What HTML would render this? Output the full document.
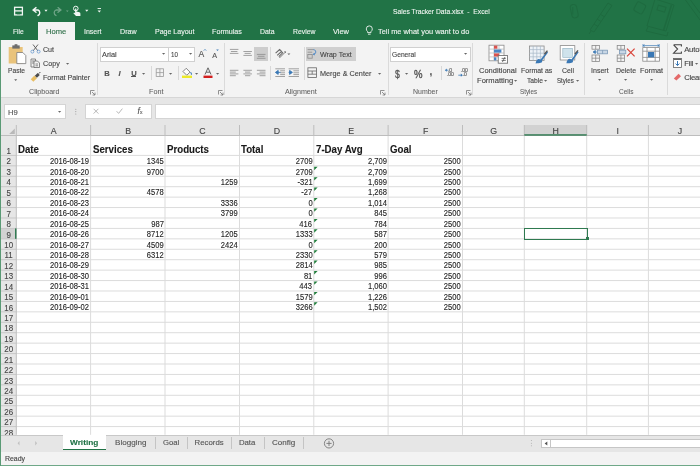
<!DOCTYPE html>
<html><head><meta charset="utf-8">
<style>
html,body{margin:0;padding:0;}
body{width:700px;height:466px;overflow:hidden;position:relative;background:#fff;font-family:"Liberation Sans",sans-serif;}
.a{position:absolute;}
.t{position:absolute;white-space:nowrap;line-height:1;-webkit-text-stroke:0.12px currentColor;}
svg{position:absolute;overflow:visible;}
#root{position:absolute;left:0;top:0;width:700px;height:466px;overflow:hidden;background:#fff;will-change:transform;}
</style></head><body><div id="root">

<div class="a" style="left:0;top:0;width:700px;height:40px;background:#217346;"></div>
<svg style="left:0;top:0" width="700" height="40" viewBox="0 0 700 40">
<g fill="none" stroke="#1b6239" stroke-width="1" opacity="0.5">
<rect x="571" y="4.5" width="6.4" height="13.5" rx="3.2" transform="rotate(-12 574 11)"/>
<path d="M572.8 7 V14.5" />
<path d="M608 3 L612 5.5 L594 32 L590 30 Z M591 31 L589 34"/>
<path d="M600 14 L604 16.5 M597 19 L601 21.5 M594 24 L598 26.5"/>
<rect x="635" y="3" width="9.5" height="10" rx="2" transform="rotate(28 640 8)"/>
<path d="M655 -1 L674 5 L666 31 L647 26 Z"/>
<path d="M671.5 5 L663.5 30.5" stroke-width="1.6"/>
<rect x="657.5" y="6" width="8" height="5" transform="rotate(17 661 8.5)"/>
<path d="M648 27 L646 31 L667 36 L668 32"/>
<path d="M684 -2 L700 20 M689 -2 L700 13"/>
</g></svg>
<svg style="left:0;top:0" width="120" height="22" viewBox="0 0 120 22">
<g fill="none" stroke="#f2f7f4" stroke-width="1.3">
<rect x="14.6" y="7.3" width="7.8" height="7.6"/>
<path d="M14.6 10.9 H22.4"/>
</g>
<rect x="16.9" y="12.9" width="3.2" height="1.4" fill="#217346"/>
<g fill="none" stroke="#f2f7f4" stroke-width="1.4" stroke-linecap="round">
<path d="M33 10 L36 7.6 M33 10 L36 12.3 M33 10 H38 A3 3 0 0 1 38 15.5"/>
</g>
<path d="M44.4 9.8 H47.6 L46 11.8 Z" fill="#f2f7f4"/>
<g fill="none" stroke="#6fa487" stroke-width="1.3" stroke-linecap="round">
<path d="M61 10 L58 7.6 M61 10 L58 12.3 M61 10 H56 A3 3 0 0 0 56 15.5"/>
</g>
<path d="M66 10.5 H68.6 L67.3 11.9 Z" fill="#6fa487"/>
<g fill="#f2f7f4">
<circle cx="75.8" cy="8.5" r="2.3" fill="none" stroke="#f2f7f4" stroke-width="1"/>
<path d="M75.1 8.6 h1.3 v3 l3 0.7 c0.7 0.2 1 0.7 1 1.4 v2.3 h-4.4 l-2.6 -2.8 l0.7 -0.6 l1 0.7 z"/>
</g>
<path d="M85.2 9.8 H88.4 L86.8 11.8 Z" fill="#f2f7f4"/>
<rect x="97.6" y="8.1" width="3.4" height="0.9" fill="#f2f7f4"/>
<path d="M97.6 10.4 H101 L99.3 12.4 Z" fill="#f2f7f4"/>
</svg>
<div class="t" style="left:393.20px;top:7.77px;font-size:7.8px;color:#eef4f0;transform:scaleX(0.862);transform-origin:0 0;">Sales Tracker Data.xlsx &nbsp;-&nbsp; Excel</div>
<div class="a" style="left:38px;top:22px;width:37px;height:18px;background:#f3f3f3;"></div>
<div class="t" style="left:13.20px;top:27.77px;font-size:7.8px;color:#eef4f0;transform:scaleX(0.860);transform-origin:0 0;">File</div>
<div class="t" style="left:46.20px;top:27.77px;font-size:7.8px;color:#2f6f49;transform:scaleX(0.975);transform-origin:0 0;">Home</div>
<div class="t" style="left:84.00px;top:27.77px;font-size:7.8px;color:#eef4f0;transform:scaleX(0.897);transform-origin:0 0;">Insert</div>
<div class="t" style="left:120.00px;top:27.77px;font-size:7.8px;color:#eef4f0;transform:scaleX(0.911);transform-origin:0 0;">Draw</div>
<div class="t" style="left:154.60px;top:27.77px;font-size:7.8px;color:#eef4f0;transform:scaleX(0.900);transform-origin:0 0;">Page Layout</div>
<div class="t" style="left:212.00px;top:27.77px;font-size:7.8px;color:#eef4f0;transform:scaleX(0.922);transform-origin:0 0;">Formulas</div>
<div class="t" style="left:260.00px;top:27.77px;font-size:7.8px;color:#eef4f0;transform:scaleX(0.885);transform-origin:0 0;">Data</div>
<div class="t" style="left:292.60px;top:27.77px;font-size:7.8px;color:#eef4f0;transform:scaleX(0.876);transform-origin:0 0;">Review</div>
<div class="t" style="left:333.00px;top:27.77px;font-size:7.8px;color:#eef4f0;transform:scaleX(0.954);transform-origin:0 0;">View</div>
<svg style="left:0;top:0" width="380" height="40" viewBox="0 0 380 40">
<path d="M367.6 32.6 V31.6 C366.7 30.8 366.3 30 366.3 28.9 A3 3 0 0 1 372.3 28.9 C372.3 30 371.9 30.8 371 31.6 V32.6 Z M368 34.2 H370.6" fill="none" stroke="#eef4f0" stroke-width="0.9"/>
</svg>
<div class="t" style="left:377.50px;top:27.77px;font-size:7.8px;color:#eef4f0;transform:scaleX(0.949);transform-origin:0 0;">Tell me what you want to do</div>
<div class="a" style="left:0;top:40px;width:700px;height:57px;background:#f3f3f3;border-bottom:1px solid #d6d6d6;"></div>
<div class="a" style="left:96.9px;top:43px;width:1px;height:52px;background:#dadada;"></div>
<div class="a" style="left:223.8px;top:43px;width:1px;height:52px;background:#dadada;"></div>
<div class="a" style="left:387.5px;top:43px;width:1px;height:52px;background:#dadada;"></div>
<div class="a" style="left:471.9px;top:43px;width:1px;height:52px;background:#dadada;"></div>
<div class="a" style="left:583.8px;top:43px;width:1px;height:52px;background:#dadada;"></div>
<div class="a" style="left:666.7px;top:43px;width:1px;height:52px;background:#dadada;"></div>
<div class="t" style="left:28.70px;top:88.49px;font-size:7.3px;color:#606060;transform:scaleX(0.973);transform-origin:0 0;-webkit-text-stroke:0.05px #606060;">Clipboard</div>
<div class="t" style="left:148.80px;top:88.49px;font-size:7.3px;color:#606060;transform:scaleX(0.986);transform-origin:0 0;-webkit-text-stroke:0.05px #606060;">Font</div>
<div class="t" style="left:284.90px;top:88.49px;font-size:7.3px;color:#606060;transform:scaleX(0.980);transform-origin:0 0;-webkit-text-stroke:0.05px #606060;">Alignment</div>
<div class="t" style="left:413.00px;top:88.49px;font-size:7.3px;color:#606060;transform:scaleX(0.952);transform-origin:0 0;-webkit-text-stroke:0.05px #606060;">Number</div>
<div class="t" style="left:519.60px;top:88.49px;font-size:7.3px;color:#606060;transform:scaleX(0.860);transform-origin:0 0;-webkit-text-stroke:0.05px #606060;">Styles</div>
<div class="t" style="left:618.60px;top:88.49px;font-size:7.3px;color:#606060;transform:scaleX(0.893);transform-origin:0 0;-webkit-text-stroke:0.05px #606060;">Cells</div>
<svg style="left:90px;top:89.8px" width="6" height="6" viewBox="0 0 6 6"><path d="M0.5 4.5 V0.5 H4.5" fill="none" stroke="#777" stroke-width="0.8"/><path d="M2 2 L5 5 M5 2.6 V5 H2.6" fill="none" stroke="#777" stroke-width="0.8"/></svg>
<svg style="left:217.5px;top:89.8px" width="6" height="6" viewBox="0 0 6 6"><path d="M0.5 4.5 V0.5 H4.5" fill="none" stroke="#777" stroke-width="0.8"/><path d="M2 2 L5 5 M5 2.6 V5 H2.6" fill="none" stroke="#777" stroke-width="0.8"/></svg>
<svg style="left:379.6px;top:89.8px" width="6" height="6" viewBox="0 0 6 6"><path d="M0.5 4.5 V0.5 H4.5" fill="none" stroke="#777" stroke-width="0.8"/><path d="M2 2 L5 5 M5 2.6 V5 H2.6" fill="none" stroke="#777" stroke-width="0.8"/></svg>
<svg style="left:466px;top:89.8px" width="6" height="6" viewBox="0 0 6 6"><path d="M0.5 4.5 V0.5 H4.5" fill="none" stroke="#777" stroke-width="0.8"/><path d="M2 2 L5 5 M5 2.6 V5 H2.6" fill="none" stroke="#777" stroke-width="0.8"/></svg>
<svg style="left:0;top:40px" width="100" height="57" viewBox="0 0 100 57">
<rect x="8.7" y="7" width="14" height="16.5" fill="#e9c37b"/>
<rect x="12.3" y="5.4" width="7.4" height="3.2" fill="#6d6d6d"/>
<rect x="14.6" y="4.2" width="2.8" height="1.8" fill="#6d6d6d"/>
<path d="M16.8 12.5 H22.8 L25.8 15.5 V23.6 H16.8 Z" fill="#fff" stroke="#7a7a7a" stroke-width="0.8"/>
<path d="M14.2 39.3 H17.2 L15.7 40.9 Z" fill="#666"/>
<g fill="none" stroke="#555" stroke-width="0.9">
<path d="M33 4.5 L38 11 M38 4.5 L33 11"/>
<circle cx="32.4" cy="11.6" r="1.5" stroke="#6a9bd0" stroke-width="0.8"/><circle cx="38.6" cy="11.6" r="1.5" stroke="#6a9bd0" stroke-width="0.8"/>
</g>
<g fill="none" stroke="#6a6a6a" stroke-width="0.8">
<path d="M31 19 H35.5 V27 H31 Z"/>
<path d="M34 21 H37.5 L39.5 23 V27.5 H34 Z" fill="#f3f3f3"/>
<path d="M32 21 H34 M32 23 H34 M35.5 24 H38 M35.5 25.8 H38"/>
</g>
<g>
<rect x="-2.5" y="-1.8" width="5.2" height="3.6" fill="#e8bd62" transform="translate(33.8 38.8) rotate(-45)"/>
<rect x="-2" y="-1.5" width="4" height="3" fill="#4a4a4a" transform="translate(37.3 35.4) rotate(-45)"/>
<path d="M38.8 33.6 L40.4 32" stroke="#4a4a4a" stroke-width="1"/>
</g>
</svg>
<div class="t" style="left:7.70px;top:66.65px;font-size:7.7px;color:#444444;transform:scaleX(0.869);transform-origin:0 0;">Paste</div>
<div class="t" style="left:42.60px;top:45.95px;font-size:7.7px;color:#444444;transform:scaleX(0.919);transform-origin:0 0;">Cut</div>
<div class="t" style="left:42.60px;top:59.65px;font-size:7.7px;color:#444444;transform:scaleX(0.934);transform-origin:0 0;">Copy</div>
<svg style="left:65.5px;top:62.6px" width="4" height="3" viewBox="0 0 4 3"><path d="M0 0 H3.2 L1.6 1.7 Z" fill="#666"/></svg>
<div class="t" style="left:42.70px;top:74.35px;font-size:7.7px;color:#444444;transform:scaleX(0.927);transform-origin:0 0;">Format Painter</div>
<div class="a" style="left:100.4px;top:47.4px;width:67.4px;height:12.6px;background:#fff;border:1px solid #d0d0d0;"></div>
<div class="a" style="left:168.3px;top:47.4px;width:24.6px;height:12.6px;background:#fff;border:1px solid #d0d0d0;"></div>
<div class="t" style="left:102.20px;top:50.95px;font-size:7.7px;color:#444444;transform:scaleX(0.955);transform-origin:0 0;">Arial</div>
<div class="t" style="left:170.70px;top:50.95px;font-size:7.7px;color:#444444;transform:scaleX(0.807);transform-origin:0 0;">10</div>
<svg style="left:162.20000000000002px;top:53.2px" width="4" height="3" viewBox="0 0 4 3"><path d="M0 0 H3.2 L1.6 1.7 Z" fill="#666"/></svg>
<svg style="left:188.70000000000002px;top:53.2px" width="4" height="3" viewBox="0 0 4 3"><path d="M0 0 H3.2 L1.6 1.7 Z" fill="#666"/></svg>
<div class="t " style="left:198.5px;top:50.2px;font-size:8.6px;color:#555;">A</div>
<div class="t " style="left:212.3px;top:51.6px;font-size:7.2px;color:#555;">A</div>
<svg style="left:0;top:0" width="230" height="100" viewBox="0 0 230 100"><path d="M203.8 50.6 L205 49.4 L206.2 50.6" fill="none" stroke="#3a78b5" stroke-width="0.8"/><path d="M216.2 49.6 H218.8 L217.5 51 Z" fill="#3a78b5"/></svg>
<div class="t " style="left:104.2px;top:69.9px;font-size:7.6px;color:#555;font-weight:bold;">B</div>
<div class="t " style="left:118.4px;top:69.9px;font-size:7.6px;color:#555;font-style:italic;font-weight:bold;">I</div>
<div class="t " style="left:131.2px;top:69.9px;font-size:7.6px;color:#555;font-weight:bold;">U</div>
<div class="a" style="left:131.3px;top:76.3px;width:4.8px;height:0.8px;background:#555;"></div>
<svg style="left:142.4px;top:72.7px" width="4" height="3" viewBox="0 0 4 3"><path d="M0 0 H3.2 L1.6 1.7 Z" fill="#666"/></svg>
<svg style="left:0;top:0" width="230" height="100" viewBox="0 0 230 100"><g fill="none" stroke="#9a9a9a" stroke-width="0.8"><rect x="156.2" y="68.8" width="7.4" height="7.6"/><path d="M159.9 68.8 V76.4 M156.2 72.6 H163.6"/></g></svg>
<svg style="left:168.8px;top:72.7px" width="4" height="3" viewBox="0 0 4 3"><path d="M0 0 H3.2 L1.6 1.7 Z" fill="#666"/></svg>
<div class="a" style="left:151px;top:66px;width:1px;height:14px;background:#d8d8d8;"></div>
<div class="a" style="left:177.9px;top:66px;width:1px;height:14px;background:#d8d8d8;"></div>
<svg style="left:0;top:0" width="230" height="100" viewBox="0 0 230 100">
<path d="M183 71.5 L186.2 68.3 L190 72.1 L186.8 75.3 Z" fill="#fff" stroke="#666" stroke-width="0.8"/>
<path d="M190.5 72 C191.8 73.5 191.8 74.6 191 74.8" fill="#3a78b5" stroke="#3a78b5" stroke-width="0.8"/>
<rect x="182" y="75.6" width="10" height="2.4" fill="#ecea2a"/>
<path d="M205 74.5 L208 67.8 L211 74.5 M206.2 72.2 H209.8" fill="none" stroke="#555" stroke-width="0.9"/>
<rect x="203.5" y="75.6" width="9" height="2.4" fill="#d21f1f"/>
</svg>
<svg style="left:195.3px;top:72.7px" width="4" height="3" viewBox="0 0 4 3"><path d="M0 0 H3.2 L1.6 1.7 Z" fill="#666"/></svg>
<svg style="left:216.3px;top:72.7px" width="4" height="3" viewBox="0 0 4 3"><path d="M0 0 H3.2 L1.6 1.7 Z" fill="#666"/></svg>
<div class="a" style="left:254.2px;top:47px;width:13.8px;height:14px;background:#cdcdcd;"></div>
<div class="a" style="left:305.9px;top:47.2px;width:49.8px;height:13.8px;background:#cfcfcf;"></div>
<svg style="left:0;top:0" width="400" height="100" viewBox="0 0 400 100">
<g stroke="#8a8a8a" stroke-width="0.8" fill="none">
<path d="M229.9 49.4 H238.4 M230.9 51.5 H237.4 M229.9 53.4 H238.4"/>
<path d="M243.4 51.5 H251.9 M244.6 53.4 H250.7 M243.4 55.4 H251.9"/>
<path d="M256.9 54.4 H265.5 M257.9 56.3 H264.5 M256.9 58.3 H265.5"/>
<path d="M229.9 70.3 H238.4 M229.9 72.1 H235.8 M229.9 73.9 H238.4 M229.9 75.7 H235.8"/>
<path d="M243.4 70.3 H251.9 M245 72.1 H250.3 M243.4 73.9 H251.9 M245 75.7 H250.3"/>
<path d="M256.9 70.3 H265.5 M259.6 72.1 H265.5 M256.9 73.9 H265.5 M259.6 75.7 H265.5"/>
<path d="M275.3 68.8 H285 M280.2 70.8 H285 M280.2 72.8 H285 M280.2 74.6 H285 M275.3 76.5 H285"/>
<path d="M288.6 68.8 H299 M293.4 70.8 H299 M293.4 72.8 H299 M293.4 74.6 H299 M288.6 76.5 H299"/>
</g>
<path d="M275.4 72.4 L278.2 70.4 V74.4 Z M277.6 72.4 H280.6" fill="#3a78b5" stroke="#3a78b5" stroke-width="0.9"/>
<path d="M292.4 72.4 L289.6 70.4 V74.4 Z M288.6 72.4 H290.4" fill="#3a78b5" stroke="#3a78b5" stroke-width="0.9"/>
<g fill="none" stroke="#6a6a6a" stroke-width="1.1">
<path d="M275.6 53.2 L279.6 49.6 L281.4 51.2 M277.2 55.4 L281.4 51.6 L282.6 52.8 L278.8 56.6"/>
</g>
<path d="M279.4 58 L285 52.4" stroke="#6a6a6a" stroke-width="0.9"/>
<path d="M284.2 51.8 L285.6 51.6 L285.4 53" fill="none" stroke="#6a6a6a" stroke-width="0.8"/>
<path d="M287.4 53.4 H290.4 L288.9 55 Z" fill="#666"/>
<g fill="none" stroke="#666" stroke-width="0.8">
<path d="M307.6 49.6 H313.6 M307.6 52.2 H312.2" stroke="#8a8a8a"/>
<rect x="307.8" y="54.4" width="4.4" height="3.8" stroke="#8a8a8a"/>
<path d="M313.4 49.6 C316.4 49.6 316.6 54 313.8 54.2" stroke="#4a86c5" stroke-width="0.9"/>
<rect x="307.9" y="67.8" width="8.6" height="9.6"/>
<path d="M307.9 71 H316.5 M307.9 74.2 H316.5 M312.2 71 V74.2"/>
</g>
<path d="M312.6 54.2 L314.6 52.8 V55.6 Z" fill="#4a86c5"/>
</svg>
<div class="a" style="left:270.3px;top:47px;width:1px;height:14px;background:#d8d8d8;"></div>
<div class="a" style="left:270.3px;top:66px;width:1px;height:14px;background:#d8d8d8;"></div>
<div class="a" style="left:303.6px;top:47px;width:1px;height:33px;background:#d8d8d8;"></div>
<div class="t" style="left:319.70px;top:51.05px;font-size:7.7px;color:#444444;transform:scaleX(0.922);transform-origin:0 0;">Wrap Text</div>
<div class="t" style="left:320.10px;top:70.05px;font-size:7.7px;color:#444444;transform:scaleX(0.947);transform-origin:0 0;">Merge &amp; Center</div>
<svg style="left:377.79999999999995px;top:72.7px" width="4" height="3" viewBox="0 0 4 3"><path d="M0 0 H3.2 L1.6 1.7 Z" fill="#666"/></svg>
<div class="a" style="left:389.5px;top:47.4px;width:79px;height:12.8px;background:#fff;border:1px solid #d0d0d0;"></div>
<div class="t" style="left:392.00px;top:50.95px;font-size:7.7px;color:#444444;transform:scaleX(0.868);transform-origin:0 0;">General</div>
<svg style="left:463.7px;top:53.400000000000006px" width="4" height="3" viewBox="0 0 4 3"><path d="M0 0 H3.2 L1.6 1.7 Z" fill="#666"/></svg>
<div class="t" style="left:394.60px;top:68.88px;font-size:10.5px;color:#555;transform:scaleX(0.824);transform-origin:0 0;-webkit-text-stroke:0.3px #555;">$</div>
<svg style="left:405.0px;top:72.7px" width="4" height="3" viewBox="0 0 4 3"><path d="M0 0 H3.2 L1.6 1.7 Z" fill="#666"/></svg>
<div class="t" style="left:413.50px;top:69.50px;font-size:10px;color:#555;transform:scaleX(0.955);transform-origin:0 0;-webkit-text-stroke:0.35px #555;">%</div>
<div class="t" style="left:429.40px;top:66.70px;font-size:10px;color:#555;font-weight:bold;">,</div>
<div class="a" style="left:440.5px;top:66px;width:1px;height:14px;background:#d8d8d8;"></div>
<div class="t " style="left:447.6px;top:67.6px;font-size:5.8px;color:#666;letter-spacing:-0.2px;">.0</div>
<div class="t " style="left:446.6px;top:72.4px;font-size:5.8px;color:#666;letter-spacing:-0.3px;">.00</div>
<div class="t " style="left:460.6px;top:67.6px;font-size:5.8px;color:#666;letter-spacing:-0.3px;">.00</div>
<div class="t " style="left:462.4px;top:72.4px;font-size:5.8px;color:#666;letter-spacing:-0.2px;">.0</div>
<svg style="left:0;top:0" width="480" height="100" viewBox="0 0 480 100">
<path d="M444.8 70.2 L446.8 68.6 V71.8 Z" fill="#3a78b5"/><path d="M446.4 70.2 H448.5" stroke="#3a78b5" stroke-width="0.8"/>
<path d="M462.8 75.2 L460.8 73.6 V76.8 Z" fill="#3a78b5"/><path d="M458.3 75.2 H461" stroke="#3a78b5" stroke-width="0.8"/>
</svg>
<svg style="left:0;top:0" width="700" height="100" viewBox="0 0 700 100">
<g>
<rect x="489" y="45.2" width="15" height="15.6" fill="#fff" stroke="#8a8a8a" stroke-width="0.8"/>
<path d="M489 49.1 H504 M489 53 H504 M489 56.9 H504 M494 45.2 V60.8 M499 45.2 V60.8" stroke="#b5b5b5" stroke-width="0.7"/>
<rect x="494" y="45.6" width="3.4" height="3.1" fill="#d9534f"/>
<rect x="494" y="49.5" width="7.4" height="3.1" fill="#4a86c5"/>
<rect x="494" y="53.4" width="5.2" height="3.1" fill="#d9534f"/>
<rect x="494" y="57.3" width="2.4" height="3.1" fill="#4a86c5"/>
<rect x="498.2" y="55.6" width="9.4" height="7.6" fill="#fff" stroke="#666" stroke-width="0.8"/>
<path d="M501.6 58.4 H505.8 M501.6 60.4 H505.8 M505 57 L502.4 62" stroke="#444" stroke-width="0.7"/>
</g>
<g>
<rect x="529.5" y="46" width="14.6" height="14.4" fill="#eef3f8" stroke="#8a8a8a" stroke-width="0.8"/>
<path d="M529.5 49.6 H544 M529.5 53.2 H544 M529.5 56.8 H544 M533.2 46 V60.4 M536.8 46 V60.4 M540.4 46 V60.4" stroke="#a8b8c8" stroke-width="0.7"/>
<path d="M535.6 63.4 C536.2 59.5 538.4 58 540.6 59.6 L547 51.5 L548 52.5 L542 60.6 C543 63 540 63.4 535.6 63.4 Z" fill="#3a78b5"/>
<path d="M544.5 54.2 L547.4 50.6" stroke="#555" stroke-width="1.4"/>
</g>
<g>
<rect x="560.2" y="45.6" width="14.6" height="14.4" fill="#fff" stroke="#8a8a8a" stroke-width="0.8"/>
<rect x="562.8" y="48.3" width="9.6" height="9" fill="#cfe3ec" stroke="#8fb0c0" stroke-width="0.6"/>
<path d="M566.4 63.2 C567 59.3 569.2 57.8 571.4 59.4 L577.6 51.3 L578.6 52.3 L572.8 60.4 C573.8 62.8 570.8 63.2 566.4 63.2 Z" fill="#3a78b5"/>
<path d="M575 54 L578 50.4" stroke="#555" stroke-width="1.4"/>
</g>
</svg>
<div class="t" style="left:479.00px;top:67.15px;font-size:7.7px;color:#444444;transform:scaleX(0.978);transform-origin:0 0;">Conditional</div>
<div class="t" style="left:477.00px;top:76.95px;font-size:7.7px;color:#444444;transform:scaleX(0.986);transform-origin:0 0;">Formatting</div>
<svg style="left:514.0px;top:80.0px" width="4" height="3" viewBox="0 0 4 3"><path d="M0 0 H3.2 L1.6 1.7 Z" fill="#666"/></svg>
<div class="t" style="left:521.30px;top:67.15px;font-size:7.7px;color:#444444;transform:scaleX(0.906);transform-origin:0 0;">Format as</div>
<div class="t" style="left:527.00px;top:76.95px;font-size:7.7px;color:#444444;transform:scaleX(0.869);transform-origin:0 0;">Table</div>
<svg style="left:544.1999999999999px;top:80.0px" width="4" height="3" viewBox="0 0 4 3"><path d="M0 0 H3.2 L1.6 1.7 Z" fill="#666"/></svg>
<div class="t" style="left:561.70px;top:67.15px;font-size:7.7px;color:#444444;transform:scaleX(0.903);transform-origin:0 0;">Cell</div>
<div class="t" style="left:556.60px;top:76.95px;font-size:7.7px;color:#444444;transform:scaleX(0.801);transform-origin:0 0;">Styles</div>
<svg style="left:575.9px;top:80.0px" width="4" height="3" viewBox="0 0 4 3"><path d="M0 0 H3.2 L1.6 1.7 Z" fill="#666"/></svg>
<svg style="left:0;top:0" width="700" height="100" viewBox="0 0 700 100">
<g fill="none" stroke="#8a8a8a" stroke-width="0.8">
<rect x="592" y="45.4" width="7.4" height="3.8"/><path d="M595.7 45.4 V49.2"/>
<rect x="592" y="55" width="7.4" height="6.4"/><path d="M592 58.2 H599.4 M595.7 55 V61.4"/>
<rect x="597.6" y="50.2" width="10" height="3.6" fill="#c9d7e6" stroke="#7d9bb8"/><path d="M602.6 50.2 V53.8" stroke="#7d9bb8"/>
<rect x="617.2" y="45.4" width="7.4" height="3.8"/><path d="M620.9 45.4 V49.2"/>
<rect x="617.2" y="55" width="7.4" height="6.4"/><path d="M617.2 58.2 H624.6 M620.9 55 V61.4"/>
<rect x="619.4" y="50.2" width="6.4" height="3.6" fill="#c9d7e6" stroke="#7d9bb8"/>
<rect x="642.8" y="47.6" width="16.6" height="13.6" fill="#fff"/>
<path d="M642.8 51.2 H659.4 M642.8 57.4 H659.4 M647 47.6 V61.2 M655.2 47.6 V61.2"/>
</g>
<path d="M593 52 L595.4 50.4 V53.6 Z M595 52 H597.4" fill="#3a78b5" stroke="#3a78b5" stroke-width="0.7"/>
<path d="M627 48.6 L634.6 56.4 M634.6 48.6 L627 56.4" stroke="#d9443a" stroke-width="1.2"/>
<rect x="648" y="52" width="6.2" height="5.4" fill="#3a78b5"/>
<path d="M643.2 45.6 H659 M643.2 45.6 L644.6 44.6 M643.2 45.6 L644.6 46.6 M659 45.6 L657.6 44.6 M659 45.6 L657.6 46.6 M643 44 V47 M659.2 44 V47" fill="none" stroke="#3a78b5" stroke-width="0.7"/>
<path d="M673.6 44.8 H681.4 V46.6 M673.6 44.8 L677.6 49 L673.6 53.2 H681.4 V51.4" fill="none" stroke="#444" stroke-width="1.1"/>
<rect x="673.6" y="58.4" width="7.8" height="9" fill="#fff" stroke="#666" stroke-width="0.8"/>
<rect x="673.6" y="58.4" width="7.8" height="1.6" fill="#666"/>
<path d="M677.5 61 V65.4 M675.6 63.6 L677.5 65.6 L679.4 63.6" fill="none" stroke="#3a78b5" stroke-width="1"/>
<path d="M673.8 78.4 L678.6 73.8 L681 76.2 L676.4 80.6 Z" fill="#e46a6a"/>
</svg>
<div class="t" style="left:590.60px;top:67.15px;font-size:7.7px;color:#444444;transform:scaleX(0.919);transform-origin:0 0;">Insert</div>
<svg style="left:598.1px;top:79.0px" width="4" height="3" viewBox="0 0 4 3"><path d="M0 0 H3.2 L1.6 1.7 Z" fill="#666"/></svg>
<div class="t" style="left:615.70px;top:67.15px;font-size:7.7px;color:#444444;transform:scaleX(0.899);transform-origin:0 0;">Delete</div>
<svg style="left:623.8px;top:79.0px" width="4" height="3" viewBox="0 0 4 3"><path d="M0 0 H3.2 L1.6 1.7 Z" fill="#666"/></svg>
<div class="t" style="left:640.00px;top:67.15px;font-size:7.7px;color:#444444;transform:scaleX(0.948);transform-origin:0 0;">Format</div>
<svg style="left:650.1px;top:79.0px" width="4" height="3" viewBox="0 0 4 3"><path d="M0 0 H3.2 L1.6 1.7 Z" fill="#666"/></svg>
<div class="t" style="left:684.20px;top:45.55px;font-size:7.7px;color:#444444;letter-spacing:-0.2px;">AutoSum</div>
<div class="t" style="left:684.20px;top:60.13px;font-size:7.5px;color:#444444;letter-spacing:-0.1px;">Fill</div>
<svg style="left:695.4px;top:62.800000000000004px" width="4" height="3" viewBox="0 0 4 3"><path d="M0 0 H3.2 L1.6 1.7 Z" fill="#666"/></svg>
<div class="t" style="left:684.20px;top:73.85px;font-size:7.7px;color:#444444;letter-spacing:-0.2px;">Clear</div>
<div class="a" style="left:0;top:98px;width:700px;height:37.5px;background:#e6e6e6;"></div>
<div class="a" style="left:4.2px;top:104.2px;width:61.8px;height:14.8px;background:#fff;border:0.8px solid #d4d4d4;box-sizing:border-box;"></div>
<div class="t" style="left:8.20px;top:108.85px;font-size:7.7px;color:#555;transform:scaleX(0.994);transform-origin:0 0;">H9</div>
<svg style="left:58.0px;top:111.2px" width="4" height="3" viewBox="0 0 4 3"><path d="M0 0 H3.2 L1.6 1.7 Z" fill="#666"/></svg>
<svg style="left:0;top:0" width="160" height="130" viewBox="0 0 160 130"><g fill="#9a9a9a"><circle cx="75.8" cy="109.2" r="0.55"/><circle cx="75.8" cy="111.6" r="0.55"/><circle cx="75.8" cy="114" r="0.55"/></g></svg>
<div class="a" style="left:85.4px;top:103.7px;width:66.7px;height:15.5px;background:#fff;border:0.8px solid #d4d4d4;box-sizing:border-box;"></div>
<svg style="left:0;top:0" width="160" height="130" viewBox="0 0 160 130">
<path d="M93.6 108.8 L98.4 113.6 M98.4 108.8 L93.6 113.6" stroke="#b0b0b0" stroke-width="0.9" fill="none"/>
<path d="M116.6 111.2 L118.6 113.4 L122.4 108.6" stroke="#b0b0b0" stroke-width="0.9" fill="none"/>
</svg>
<div class="t " style="left:137.6px;top:107.2px;font-size:8.4px;color:#555;font-family:"Liberation Serif",serif;"><i>f</i><span style="font-size:5px">x</span></div>
<div class="a" style="left:154.9px;top:104.3px;width:546px;height:14.8px;background:#fff;border:0.8px solid #d4d4d4;box-sizing:border-box;"></div>
<div class="a" style="left:16.3px;top:135.5px;width:684px;height:299.3px;background:#fff;"></div>
<div class="a" style="left:1px;top:135.5px;width:15.3px;height:299.3px;background:#e6e6e6;"></div>
<div class="a" style="left:1px;top:228.41px;width:15.3px;height:10.430000000000007px;background:#d2d2d2;"></div>
<div class="a" style="left:524.3px;top:125.0px;width:62.40000000000009px;height:10.5px;background:#d2d2d2;"></div>
<svg style="left:0;top:0" width="700" height="466" viewBox="0 0 700 466"><rect x="90.1" y="135.5" width="1" height="299.3" fill="#dcdcdc"/><rect x="90.1" y="125.0" width="1" height="10.5" fill="#bdbdbd"/><rect x="164.5" y="135.5" width="1" height="299.3" fill="#dcdcdc"/><rect x="164.5" y="125.0" width="1" height="10.5" fill="#bdbdbd"/><rect x="239.0" y="135.5" width="1" height="299.3" fill="#dcdcdc"/><rect x="239.0" y="125.0" width="1" height="10.5" fill="#bdbdbd"/><rect x="313.3" y="135.5" width="1" height="299.3" fill="#dcdcdc"/><rect x="313.3" y="125.0" width="1" height="10.5" fill="#bdbdbd"/><rect x="387.6" y="135.5" width="1" height="299.3" fill="#dcdcdc"/><rect x="387.6" y="125.0" width="1" height="10.5" fill="#bdbdbd"/><rect x="462.0" y="135.5" width="1" height="299.3" fill="#dcdcdc"/><rect x="462.0" y="125.0" width="1" height="10.5" fill="#bdbdbd"/><rect x="523.8" y="135.5" width="1" height="299.3" fill="#dcdcdc"/><rect x="523.8" y="125.0" width="1" height="10.5" fill="#bdbdbd"/><rect x="586.2" y="135.5" width="1" height="299.3" fill="#dcdcdc"/><rect x="586.2" y="125.0" width="1" height="10.5" fill="#bdbdbd"/><rect x="647.9" y="135.5" width="1" height="299.3" fill="#dcdcdc"/><rect x="647.9" y="125.0" width="1" height="10.5" fill="#bdbdbd"/><rect x="710.3" y="135.5" width="1" height="299.3" fill="#dcdcdc"/><rect x="710.3" y="125.0" width="1" height="10.5" fill="#bdbdbd"/><rect x="16.3" y="154.9" width="684" height="1" fill="#dcdcdc"/><rect x="1" y="154.9" width="15.3" height="1" fill="#c8c8c8"/><rect x="16.3" y="165.33" width="684" height="1" fill="#dcdcdc"/><rect x="1" y="165.33" width="15.3" height="1" fill="#c8c8c8"/><rect x="16.3" y="175.76" width="684" height="1" fill="#dcdcdc"/><rect x="1" y="175.76" width="15.3" height="1" fill="#c8c8c8"/><rect x="16.3" y="186.19" width="684" height="1" fill="#dcdcdc"/><rect x="1" y="186.19" width="15.3" height="1" fill="#c8c8c8"/><rect x="16.3" y="196.62" width="684" height="1" fill="#dcdcdc"/><rect x="1" y="196.62" width="15.3" height="1" fill="#c8c8c8"/><rect x="16.3" y="207.05" width="684" height="1" fill="#dcdcdc"/><rect x="1" y="207.05" width="15.3" height="1" fill="#c8c8c8"/><rect x="16.3" y="217.48000000000002" width="684" height="1" fill="#dcdcdc"/><rect x="1" y="217.48000000000002" width="15.3" height="1" fill="#c8c8c8"/><rect x="16.3" y="227.91" width="684" height="1" fill="#dcdcdc"/><rect x="1" y="227.91" width="15.3" height="1" fill="#c8c8c8"/><rect x="16.3" y="238.34" width="684" height="1" fill="#dcdcdc"/><rect x="1" y="238.34" width="15.3" height="1" fill="#c8c8c8"/><rect x="16.3" y="248.77" width="684" height="1" fill="#dcdcdc"/><rect x="1" y="248.77" width="15.3" height="1" fill="#c8c8c8"/><rect x="16.3" y="259.2" width="684" height="1" fill="#dcdcdc"/><rect x="1" y="259.2" width="15.3" height="1" fill="#c8c8c8"/><rect x="16.3" y="269.63" width="684" height="1" fill="#dcdcdc"/><rect x="1" y="269.63" width="15.3" height="1" fill="#c8c8c8"/><rect x="16.3" y="280.06" width="684" height="1" fill="#dcdcdc"/><rect x="1" y="280.06" width="15.3" height="1" fill="#c8c8c8"/><rect x="16.3" y="290.49" width="684" height="1" fill="#dcdcdc"/><rect x="1" y="290.49" width="15.3" height="1" fill="#c8c8c8"/><rect x="16.3" y="300.91999999999996" width="684" height="1" fill="#dcdcdc"/><rect x="1" y="300.91999999999996" width="15.3" height="1" fill="#c8c8c8"/><rect x="16.3" y="311.35" width="684" height="1" fill="#dcdcdc"/><rect x="1" y="311.35" width="15.3" height="1" fill="#c8c8c8"/><rect x="16.3" y="321.78" width="684" height="1" fill="#dcdcdc"/><rect x="1" y="321.78" width="15.3" height="1" fill="#c8c8c8"/><rect x="16.3" y="332.21000000000004" width="684" height="1" fill="#dcdcdc"/><rect x="1" y="332.21000000000004" width="15.3" height="1" fill="#c8c8c8"/><rect x="16.3" y="342.64" width="684" height="1" fill="#dcdcdc"/><rect x="1" y="342.64" width="15.3" height="1" fill="#c8c8c8"/><rect x="16.3" y="353.07" width="684" height="1" fill="#dcdcdc"/><rect x="1" y="353.07" width="15.3" height="1" fill="#c8c8c8"/><rect x="16.3" y="363.5" width="684" height="1" fill="#dcdcdc"/><rect x="1" y="363.5" width="15.3" height="1" fill="#c8c8c8"/><rect x="16.3" y="373.93" width="684" height="1" fill="#dcdcdc"/><rect x="1" y="373.93" width="15.3" height="1" fill="#c8c8c8"/><rect x="16.3" y="384.36" width="684" height="1" fill="#dcdcdc"/><rect x="1" y="384.36" width="15.3" height="1" fill="#c8c8c8"/><rect x="16.3" y="394.78999999999996" width="684" height="1" fill="#dcdcdc"/><rect x="1" y="394.78999999999996" width="15.3" height="1" fill="#c8c8c8"/><rect x="16.3" y="405.22" width="684" height="1" fill="#dcdcdc"/><rect x="1" y="405.22" width="15.3" height="1" fill="#c8c8c8"/><rect x="16.3" y="415.65" width="684" height="1" fill="#dcdcdc"/><rect x="1" y="415.65" width="15.3" height="1" fill="#c8c8c8"/><rect x="16.3" y="426.08000000000004" width="684" height="1" fill="#dcdcdc"/><rect x="1" y="426.08000000000004" width="15.3" height="1" fill="#c8c8c8"/><rect x="1" y="135.0" width="700" height="1" fill="#bdbdbd"/><rect x="15.8" y="125.0" width="1" height="309.8" fill="#bdbdbd"/><rect x="524.3" y="134.3" width="62.40000000000009" height="1.3" fill="#217346"/><rect x="15.100000000000001" y="228.41" width="1.3" height="10.430000000000007" fill="#217346"/><path d="M9.2 134 L14.8 134 L14.8 128.4 Z" fill="#b9b9b9"/></svg>
<div class="t" style="left:43.75px;width:20px;text-align:center;top:126.62px;font-size:8.8px;color:#444;">A</div>
<div class="t" style="left:118.10px;width:20px;text-align:center;top:126.62px;font-size:8.8px;color:#444;">B</div>
<div class="t" style="left:192.55px;width:20px;text-align:center;top:126.62px;font-size:8.8px;color:#444;">C</div>
<div class="t" style="left:266.95px;width:20px;text-align:center;top:126.62px;font-size:8.8px;color:#444;">D</div>
<div class="t" style="left:341.25px;width:20px;text-align:center;top:126.62px;font-size:8.8px;color:#444;">E</div>
<div class="t" style="left:415.60px;width:20px;text-align:center;top:126.62px;font-size:8.8px;color:#444;">F</div>
<div class="t" style="left:483.70px;width:20px;text-align:center;top:126.62px;font-size:8.8px;color:#444;">G</div>
<div class="t" style="left:545.80px;width:20px;text-align:center;top:126.62px;font-size:8.8px;color:#444;">H</div>
<div class="t" style="left:607.85px;width:20px;text-align:center;top:126.62px;font-size:8.8px;color:#444;">I</div>
<div class="t" style="left:669.90px;width:20px;text-align:center;top:126.62px;font-size:8.8px;color:#444;">J</div>
<div class="t" style="left:0.6px;width:15.3px;text-align:center;top:147.06px;font-size:8.4px;color:#444;transform:scaleX(0.95);">1</div>
<div class="t" style="left:0.6px;width:15.3px;text-align:center;top:157.49px;font-size:8.4px;color:#444;transform:scaleX(0.95);">2</div>
<div class="t" style="left:0.6px;width:15.3px;text-align:center;top:167.92px;font-size:8.4px;color:#444;transform:scaleX(0.95);">3</div>
<div class="t" style="left:0.6px;width:15.3px;text-align:center;top:178.35px;font-size:8.4px;color:#444;transform:scaleX(0.95);">4</div>
<div class="t" style="left:0.6px;width:15.3px;text-align:center;top:188.78px;font-size:8.4px;color:#444;transform:scaleX(0.95);">5</div>
<div class="t" style="left:0.6px;width:15.3px;text-align:center;top:199.21px;font-size:8.4px;color:#444;transform:scaleX(0.95);">6</div>
<div class="t" style="left:0.6px;width:15.3px;text-align:center;top:209.64px;font-size:8.4px;color:#444;transform:scaleX(0.95);">7</div>
<div class="t" style="left:0.6px;width:15.3px;text-align:center;top:220.07px;font-size:8.4px;color:#444;transform:scaleX(0.95);">8</div>
<div class="t" style="left:0.6px;width:15.3px;text-align:center;top:230.50px;font-size:8.4px;color:#444;transform:scaleX(0.95);">9</div>
<div class="t" style="left:0.6px;width:15.3px;text-align:center;top:240.93px;font-size:8.4px;color:#444;transform:scaleX(0.95);">10</div>
<div class="t" style="left:0.6px;width:15.3px;text-align:center;top:251.36px;font-size:8.4px;color:#444;transform:scaleX(0.95);">11</div>
<div class="t" style="left:0.6px;width:15.3px;text-align:center;top:261.79px;font-size:8.4px;color:#444;transform:scaleX(0.95);">12</div>
<div class="t" style="left:0.6px;width:15.3px;text-align:center;top:272.22px;font-size:8.4px;color:#444;transform:scaleX(0.95);">13</div>
<div class="t" style="left:0.6px;width:15.3px;text-align:center;top:282.65px;font-size:8.4px;color:#444;transform:scaleX(0.95);">14</div>
<div class="t" style="left:0.6px;width:15.3px;text-align:center;top:293.08px;font-size:8.4px;color:#444;transform:scaleX(0.95);">15</div>
<div class="t" style="left:0.6px;width:15.3px;text-align:center;top:303.51px;font-size:8.4px;color:#444;transform:scaleX(0.95);">16</div>
<div class="t" style="left:0.6px;width:15.3px;text-align:center;top:313.94px;font-size:8.4px;color:#444;transform:scaleX(0.95);">17</div>
<div class="t" style="left:0.6px;width:15.3px;text-align:center;top:324.37px;font-size:8.4px;color:#444;transform:scaleX(0.95);">18</div>
<div class="t" style="left:0.6px;width:15.3px;text-align:center;top:334.80px;font-size:8.4px;color:#444;transform:scaleX(0.95);">19</div>
<div class="t" style="left:0.6px;width:15.3px;text-align:center;top:345.23px;font-size:8.4px;color:#444;transform:scaleX(0.95);">20</div>
<div class="t" style="left:0.6px;width:15.3px;text-align:center;top:355.66px;font-size:8.4px;color:#444;transform:scaleX(0.95);">21</div>
<div class="t" style="left:0.6px;width:15.3px;text-align:center;top:366.09px;font-size:8.4px;color:#444;transform:scaleX(0.95);">22</div>
<div class="t" style="left:0.6px;width:15.3px;text-align:center;top:376.52px;font-size:8.4px;color:#444;transform:scaleX(0.95);">23</div>
<div class="t" style="left:0.6px;width:15.3px;text-align:center;top:386.95px;font-size:8.4px;color:#444;transform:scaleX(0.95);">24</div>
<div class="t" style="left:0.6px;width:15.3px;text-align:center;top:397.38px;font-size:8.4px;color:#444;transform:scaleX(0.95);">25</div>
<div class="t" style="left:0.6px;width:15.3px;text-align:center;top:407.81px;font-size:8.4px;color:#444;transform:scaleX(0.95);">26</div>
<div class="t" style="left:0.6px;width:15.3px;text-align:center;top:418.24px;font-size:8.4px;color:#444;transform:scaleX(0.95);">27</div>
<div class="t" style="left:0.6px;width:15.3px;text-align:center;top:428.67px;font-size:8.4px;color:#444;transform:scaleX(0.95);">28</div>
<div class="t" style="left:18.20px;top:144.93px;font-size:10.2px;font-weight:bold;color:#1a1a1a;transform:scaleX(0.95);transform-origin:0 0;">Date</div>
<div class="t" style="left:92.50px;top:144.93px;font-size:10.2px;font-weight:bold;color:#1a1a1a;transform:scaleX(0.95);transform-origin:0 0;">Services</div>
<div class="t" style="left:166.90px;top:144.93px;font-size:10.2px;font-weight:bold;color:#1a1a1a;transform:scaleX(0.95);transform-origin:0 0;">Products</div>
<div class="t" style="left:241.40px;top:144.93px;font-size:10.2px;font-weight:bold;color:#1a1a1a;transform:scaleX(0.95);transform-origin:0 0;">Total</div>
<div class="t" style="left:315.70px;top:144.93px;font-size:10.2px;font-weight:bold;color:#1a1a1a;transform:scaleX(0.95);transform-origin:0 0;">7-Day Avg</div>
<div class="t" style="left:390.00px;top:144.93px;font-size:10.2px;font-weight:bold;color:#1a1a1a;transform:scaleX(0.95);transform-origin:0 0;">Goal</div>
<div class="t" style="right:610.90px;top:157.19px;font-size:8.4px;color:#1e1e1e;transform:scaleX(0.905);transform-origin:100% 0;">2016-08-19</div><div class="t" style="right:536.50px;top:157.19px;font-size:8.4px;color:#1e1e1e;transform:scaleX(0.905);transform-origin:100% 0;">1345</div><div class="t" style="right:387.70px;top:157.19px;font-size:8.4px;color:#1e1e1e;transform:scaleX(0.905);transform-origin:100% 0;">2709</div><div class="t" style="right:313.40px;top:157.19px;font-size:8.4px;color:#1e1e1e;transform:scaleX(0.905);transform-origin:100% 0;">2,709</div><div class="t" style="right:239.00px;top:157.19px;font-size:8.4px;color:#1e1e1e;transform:scaleX(0.905);transform-origin:100% 0;">2500</div><div class="t" style="right:610.90px;top:167.62px;font-size:8.4px;color:#1e1e1e;transform:scaleX(0.905);transform-origin:100% 0;">2016-08-20</div><div class="t" style="right:536.50px;top:167.62px;font-size:8.4px;color:#1e1e1e;transform:scaleX(0.905);transform-origin:100% 0;">9700</div><div class="t" style="right:387.70px;top:167.62px;font-size:8.4px;color:#1e1e1e;transform:scaleX(0.905);transform-origin:100% 0;">2709</div><div class="t" style="right:313.40px;top:167.62px;font-size:8.4px;color:#1e1e1e;transform:scaleX(0.905);transform-origin:100% 0;">2,709</div><div class="t" style="right:239.00px;top:167.62px;font-size:8.4px;color:#1e1e1e;transform:scaleX(0.905);transform-origin:100% 0;">2500</div><div class="t" style="right:610.90px;top:178.05px;font-size:8.4px;color:#1e1e1e;transform:scaleX(0.905);transform-origin:100% 0;">2016-08-21</div><div class="t" style="right:462.00px;top:178.05px;font-size:8.4px;color:#1e1e1e;transform:scaleX(0.905);transform-origin:100% 0;">1259</div><div class="t" style="right:387.70px;top:178.05px;font-size:8.4px;color:#1e1e1e;transform:scaleX(0.905);transform-origin:100% 0;">-321</div><div class="t" style="right:313.40px;top:178.05px;font-size:8.4px;color:#1e1e1e;transform:scaleX(0.905);transform-origin:100% 0;">1,699</div><div class="t" style="right:239.00px;top:178.05px;font-size:8.4px;color:#1e1e1e;transform:scaleX(0.905);transform-origin:100% 0;">2500</div><div class="t" style="right:610.90px;top:188.48px;font-size:8.4px;color:#1e1e1e;transform:scaleX(0.905);transform-origin:100% 0;">2016-08-22</div><div class="t" style="right:536.50px;top:188.48px;font-size:8.4px;color:#1e1e1e;transform:scaleX(0.905);transform-origin:100% 0;">4578</div><div class="t" style="right:387.70px;top:188.48px;font-size:8.4px;color:#1e1e1e;transform:scaleX(0.905);transform-origin:100% 0;">-27</div><div class="t" style="right:313.40px;top:188.48px;font-size:8.4px;color:#1e1e1e;transform:scaleX(0.905);transform-origin:100% 0;">1,268</div><div class="t" style="right:239.00px;top:188.48px;font-size:8.4px;color:#1e1e1e;transform:scaleX(0.905);transform-origin:100% 0;">2500</div><div class="t" style="right:610.90px;top:198.91px;font-size:8.4px;color:#1e1e1e;transform:scaleX(0.905);transform-origin:100% 0;">2016-08-23</div><div class="t" style="right:462.00px;top:198.91px;font-size:8.4px;color:#1e1e1e;transform:scaleX(0.905);transform-origin:100% 0;">3336</div><div class="t" style="right:387.70px;top:198.91px;font-size:8.4px;color:#1e1e1e;transform:scaleX(0.905);transform-origin:100% 0;">0</div><div class="t" style="right:313.40px;top:198.91px;font-size:8.4px;color:#1e1e1e;transform:scaleX(0.905);transform-origin:100% 0;">1,014</div><div class="t" style="right:239.00px;top:198.91px;font-size:8.4px;color:#1e1e1e;transform:scaleX(0.905);transform-origin:100% 0;">2500</div><div class="t" style="right:610.90px;top:209.34px;font-size:8.4px;color:#1e1e1e;transform:scaleX(0.905);transform-origin:100% 0;">2016-08-24</div><div class="t" style="right:462.00px;top:209.34px;font-size:8.4px;color:#1e1e1e;transform:scaleX(0.905);transform-origin:100% 0;">3799</div><div class="t" style="right:387.70px;top:209.34px;font-size:8.4px;color:#1e1e1e;transform:scaleX(0.905);transform-origin:100% 0;">0</div><div class="t" style="right:313.40px;top:209.34px;font-size:8.4px;color:#1e1e1e;transform:scaleX(0.905);transform-origin:100% 0;">845</div><div class="t" style="right:239.00px;top:209.34px;font-size:8.4px;color:#1e1e1e;transform:scaleX(0.905);transform-origin:100% 0;">2500</div><div class="t" style="right:610.90px;top:219.77px;font-size:8.4px;color:#1e1e1e;transform:scaleX(0.905);transform-origin:100% 0;">2016-08-25</div><div class="t" style="right:536.50px;top:219.77px;font-size:8.4px;color:#1e1e1e;transform:scaleX(0.905);transform-origin:100% 0;">987</div><div class="t" style="right:387.70px;top:219.77px;font-size:8.4px;color:#1e1e1e;transform:scaleX(0.905);transform-origin:100% 0;">416</div><div class="t" style="right:313.40px;top:219.77px;font-size:8.4px;color:#1e1e1e;transform:scaleX(0.905);transform-origin:100% 0;">784</div><div class="t" style="right:239.00px;top:219.77px;font-size:8.4px;color:#1e1e1e;transform:scaleX(0.905);transform-origin:100% 0;">2500</div><div class="t" style="right:610.90px;top:230.20px;font-size:8.4px;color:#1e1e1e;transform:scaleX(0.905);transform-origin:100% 0;">2016-08-26</div><div class="t" style="right:536.50px;top:230.20px;font-size:8.4px;color:#1e1e1e;transform:scaleX(0.905);transform-origin:100% 0;">8712</div><div class="t" style="right:462.00px;top:230.20px;font-size:8.4px;color:#1e1e1e;transform:scaleX(0.905);transform-origin:100% 0;">1205</div><div class="t" style="right:387.70px;top:230.20px;font-size:8.4px;color:#1e1e1e;transform:scaleX(0.905);transform-origin:100% 0;">1333</div><div class="t" style="right:313.40px;top:230.20px;font-size:8.4px;color:#1e1e1e;transform:scaleX(0.905);transform-origin:100% 0;">587</div><div class="t" style="right:239.00px;top:230.20px;font-size:8.4px;color:#1e1e1e;transform:scaleX(0.905);transform-origin:100% 0;">2500</div><div class="t" style="right:610.90px;top:240.63px;font-size:8.4px;color:#1e1e1e;transform:scaleX(0.905);transform-origin:100% 0;">2016-08-27</div><div class="t" style="right:536.50px;top:240.63px;font-size:8.4px;color:#1e1e1e;transform:scaleX(0.905);transform-origin:100% 0;">4509</div><div class="t" style="right:462.00px;top:240.63px;font-size:8.4px;color:#1e1e1e;transform:scaleX(0.905);transform-origin:100% 0;">2424</div><div class="t" style="right:387.70px;top:240.63px;font-size:8.4px;color:#1e1e1e;transform:scaleX(0.905);transform-origin:100% 0;">0</div><div class="t" style="right:313.40px;top:240.63px;font-size:8.4px;color:#1e1e1e;transform:scaleX(0.905);transform-origin:100% 0;">200</div><div class="t" style="right:239.00px;top:240.63px;font-size:8.4px;color:#1e1e1e;transform:scaleX(0.905);transform-origin:100% 0;">2500</div><div class="t" style="right:610.90px;top:251.06px;font-size:8.4px;color:#1e1e1e;transform:scaleX(0.905);transform-origin:100% 0;">2016-08-28</div><div class="t" style="right:536.50px;top:251.06px;font-size:8.4px;color:#1e1e1e;transform:scaleX(0.905);transform-origin:100% 0;">6312</div><div class="t" style="right:387.70px;top:251.06px;font-size:8.4px;color:#1e1e1e;transform:scaleX(0.905);transform-origin:100% 0;">2330</div><div class="t" style="right:313.40px;top:251.06px;font-size:8.4px;color:#1e1e1e;transform:scaleX(0.905);transform-origin:100% 0;">579</div><div class="t" style="right:239.00px;top:251.06px;font-size:8.4px;color:#1e1e1e;transform:scaleX(0.905);transform-origin:100% 0;">2500</div><div class="t" style="right:610.90px;top:261.49px;font-size:8.4px;color:#1e1e1e;transform:scaleX(0.905);transform-origin:100% 0;">2016-08-29</div><div class="t" style="right:387.70px;top:261.49px;font-size:8.4px;color:#1e1e1e;transform:scaleX(0.905);transform-origin:100% 0;">2814</div><div class="t" style="right:313.40px;top:261.49px;font-size:8.4px;color:#1e1e1e;transform:scaleX(0.905);transform-origin:100% 0;">985</div><div class="t" style="right:239.00px;top:261.49px;font-size:8.4px;color:#1e1e1e;transform:scaleX(0.905);transform-origin:100% 0;">2500</div><div class="t" style="right:610.90px;top:271.92px;font-size:8.4px;color:#1e1e1e;transform:scaleX(0.905);transform-origin:100% 0;">2016-08-30</div><div class="t" style="right:387.70px;top:271.92px;font-size:8.4px;color:#1e1e1e;transform:scaleX(0.905);transform-origin:100% 0;">81</div><div class="t" style="right:313.40px;top:271.92px;font-size:8.4px;color:#1e1e1e;transform:scaleX(0.905);transform-origin:100% 0;">996</div><div class="t" style="right:239.00px;top:271.92px;font-size:8.4px;color:#1e1e1e;transform:scaleX(0.905);transform-origin:100% 0;">2500</div><div class="t" style="right:610.90px;top:282.35px;font-size:8.4px;color:#1e1e1e;transform:scaleX(0.905);transform-origin:100% 0;">2016-08-31</div><div class="t" style="right:387.70px;top:282.35px;font-size:8.4px;color:#1e1e1e;transform:scaleX(0.905);transform-origin:100% 0;">443</div><div class="t" style="right:313.40px;top:282.35px;font-size:8.4px;color:#1e1e1e;transform:scaleX(0.905);transform-origin:100% 0;">1,060</div><div class="t" style="right:239.00px;top:282.35px;font-size:8.4px;color:#1e1e1e;transform:scaleX(0.905);transform-origin:100% 0;">2500</div><div class="t" style="right:610.90px;top:292.78px;font-size:8.4px;color:#1e1e1e;transform:scaleX(0.905);transform-origin:100% 0;">2016-09-01</div><div class="t" style="right:387.70px;top:292.78px;font-size:8.4px;color:#1e1e1e;transform:scaleX(0.905);transform-origin:100% 0;">1579</div><div class="t" style="right:313.40px;top:292.78px;font-size:8.4px;color:#1e1e1e;transform:scaleX(0.905);transform-origin:100% 0;">1,226</div><div class="t" style="right:239.00px;top:292.78px;font-size:8.4px;color:#1e1e1e;transform:scaleX(0.905);transform-origin:100% 0;">2500</div><div class="t" style="right:610.90px;top:303.21px;font-size:8.4px;color:#1e1e1e;transform:scaleX(0.905);transform-origin:100% 0;">2016-09-02</div><div class="t" style="right:387.70px;top:303.21px;font-size:8.4px;color:#1e1e1e;transform:scaleX(0.905);transform-origin:100% 0;">3266</div><div class="t" style="right:313.40px;top:303.21px;font-size:8.4px;color:#1e1e1e;transform:scaleX(0.905);transform-origin:100% 0;">1,502</div><div class="t" style="right:239.00px;top:303.21px;font-size:8.4px;color:#1e1e1e;transform:scaleX(0.905);transform-origin:100% 0;">2500</div>
<svg style="left:0;top:0" width="700" height="466" viewBox="0 0 700 466"><path d="M314.2 166.73000000000002 h3.4 l-3.4 3.4 z" fill="#1f7d3a"/><path d="M314.2 177.16 h3.4 l-3.4 3.4 z" fill="#1f7d3a"/><path d="M314.2 187.59 h3.4 l-3.4 3.4 z" fill="#1f7d3a"/><path d="M314.2 198.02 h3.4 l-3.4 3.4 z" fill="#1f7d3a"/><path d="M314.2 208.45000000000002 h3.4 l-3.4 3.4 z" fill="#1f7d3a"/><path d="M314.2 218.88000000000002 h3.4 l-3.4 3.4 z" fill="#1f7d3a"/><path d="M314.2 229.31 h3.4 l-3.4 3.4 z" fill="#1f7d3a"/><path d="M314.2 239.74 h3.4 l-3.4 3.4 z" fill="#1f7d3a"/><path d="M314.2 250.17000000000002 h3.4 l-3.4 3.4 z" fill="#1f7d3a"/><path d="M314.2 260.59999999999997 h3.4 l-3.4 3.4 z" fill="#1f7d3a"/><path d="M314.2 271.03 h3.4 l-3.4 3.4 z" fill="#1f7d3a"/><path d="M314.2 281.46 h3.4 l-3.4 3.4 z" fill="#1f7d3a"/><path d="M314.2 291.89 h3.4 l-3.4 3.4 z" fill="#1f7d3a"/><path d="M314.2 302.31999999999994 h3.4 l-3.4 3.4 z" fill="#1f7d3a"/></svg>
<div class="a" style="left:523.5px;top:227.5px;width:64.3px;height:12px;border:1.6px solid #2f7a50;box-sizing:border-box;"></div>
<div class="a" style="left:585.7px;top:237.3px;width:3px;height:3px;background:#2f7a50;"></div>
<div class="a" style="left:0;top:434.8px;width:700px;height:17.30000000000001px;background:#e6e6e6;border-top:1px solid #c8c8c8;box-sizing:border-box;"></div>
<svg style="left:0;top:0" width="700" height="466" viewBox="0 0 700 466"><path d="M19.5 441 L17.6 443.2 L19.5 445.4 Z" fill="#c0c0c0"/><path d="M35.2 441 L37.1 443.2 L35.2 445.4 Z" fill="#c0c0c0"/></svg>
<div class="a" style="left:62.6px;top:434.6px;width:43.4px;height:14.6px;background:#fff;border-bottom:1.3px solid #217346;"></div>
<div class="t" style="left:69.70px;top:439.17px;font-size:7.8px;color:#217346;font-weight:bold;transform:scaleX(1.059);transform-origin:0 0;">Writing</div>
<div class="t" style="left:114.60px;top:439.07px;font-size:7.8px;color:#555;transform:scaleX(1.035);transform-origin:0 0;">Blogging</div>
<div class="t" style="left:162.60px;top:439.07px;font-size:7.8px;color:#555;transform:scaleX(0.990);transform-origin:0 0;">Goal</div>
<div class="t" style="left:194.60px;top:439.07px;font-size:7.8px;color:#555;">Records</div>
<div class="t" style="left:238.90px;top:439.07px;font-size:7.8px;color:#555;">Data</div>
<div class="t" style="left:272.00px;top:439.07px;font-size:7.8px;color:#555;transform:scaleX(1.029);transform-origin:0 0;">Config</div>
<div class="a" style="left:154.9px;top:437px;width:1px;height:11.6px;background:#c4c4c4;"></div>
<div class="a" style="left:186.6px;top:437px;width:1px;height:11.6px;background:#c4c4c4;"></div>
<div class="a" style="left:231.1px;top:437px;width:1px;height:11.6px;background:#c4c4c4;"></div>
<div class="a" style="left:263.5px;top:437px;width:1px;height:11.6px;background:#c4c4c4;"></div>
<div class="a" style="left:303.3px;top:437px;width:1px;height:11.6px;background:#c4c4c4;"></div>
<svg style="left:0;top:0" width="700" height="466" viewBox="0 0 700 466"><circle cx="329" cy="443.4" r="4.6" fill="none" stroke="#777" stroke-width="0.9"/><path d="M329 440.8 V446 M326.4 443.4 H331.6" stroke="#777" stroke-width="0.9"/><g fill="#a8a8a8"><circle cx="531.4" cy="440.6" r="0.5"/><circle cx="531.4" cy="443.2" r="0.5"/><circle cx="531.4" cy="445.8" r="0.5"/></g></svg>
<div class="a" style="left:541.1px;top:439.3px;width:170px;height:8.4px;background:#fff;border:0.8px solid #c6c6c6;box-sizing:border-box;"></div>
<div class="a" style="left:550.3px;top:439.3px;width:0.8px;height:8.4px;background:#c6c6c6;"></div>
<svg style="left:0;top:0" width="700" height="466" viewBox="0 0 700 466"><path d="M547.3 441.4 L544.6 443.5 L547.3 445.6 Z" fill="#555"/></svg>
<div class="a" style="left:0;top:452.1px;width:700px;height:14px;background:#f3f3f3;"></div>
<div class="t " style="left:5px;top:455.4px;font-size:7px;color:#444;letter-spacing:-0.05px;">Ready</div>
<div class="a" style="left:0;top:465px;width:700px;height:1px;background:#6fa888;"></div>
<div class="a" style="left:0;top:40px;width:1.1px;height:426px;background:#5a9a75;"></div>
</div></body></html>
